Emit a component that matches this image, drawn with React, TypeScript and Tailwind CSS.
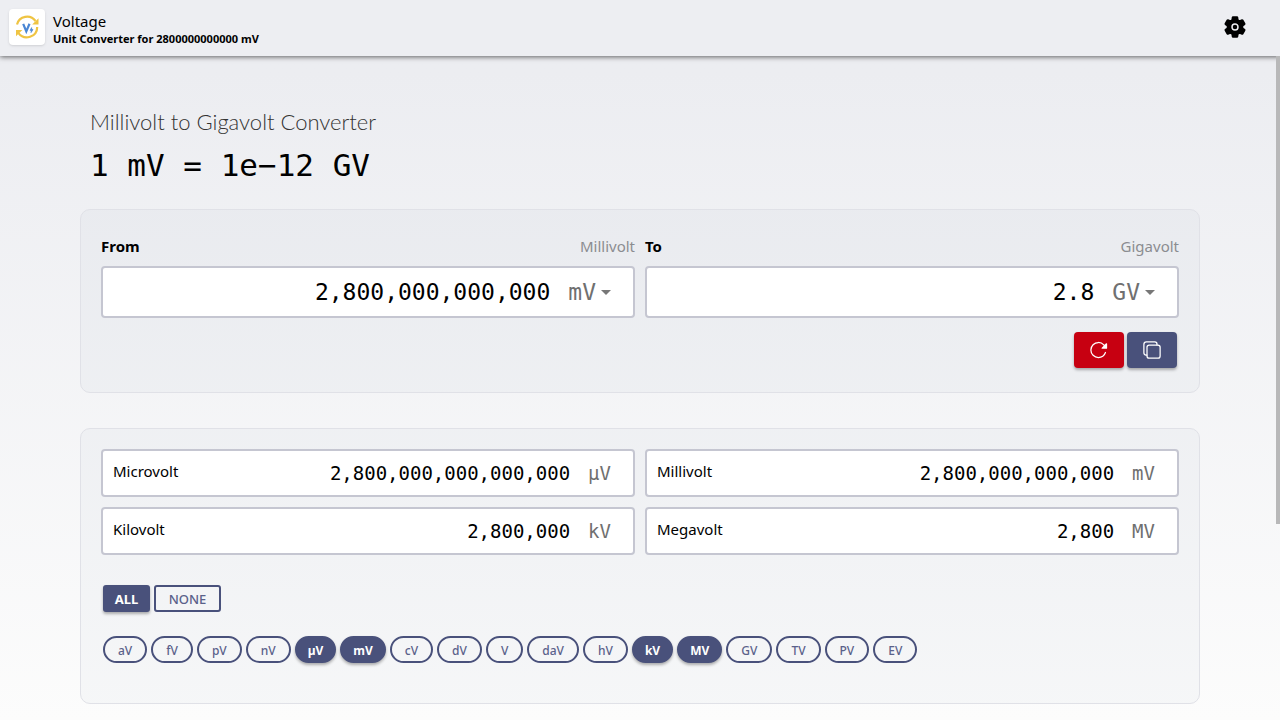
import { useState } from "react";
import clsx from "clsx";
import { IoCopyOutline, IoReload, IoSettings } from "react-icons/io5";

const UNITS = ["aV", "fV", "pV", "nV", "µV", "mV", "cV", "dV", "V", "daV", "hV", "kV", "MV", "GV", "TV", "PV", "EV"];

const RESULTS = [
  { name: "Microvolt", value: "2,800,000,000,000,000", unit: "µV" },
  { name: "Millivolt", value: "2,800,000,000,000", unit: "mV" },
  { name: "Kilovolt", value: "2,800,000", unit: "kV" },
  { name: "Megavolt", value: "2,800", unit: "MV" },
];

function Logo() {
  return (
    <svg viewBox="0 0 36 36" className="h-9 w-9 shrink-0 rounded bg-white shadow" aria-hidden="true">
      <g fill="none" stroke="#efc443" strokeWidth="2.2">
        <path d="M8 15.5A10.4 10.4 0 0 1 26.5 12" />
        <path d="M28.2 18A10.4 10.4 0 0 1 9.5 24.2" />
      </g>
      <path d="M29.5 9.3v6.2h-6.3z" fill="#efc443" />
      <path d="M7 27.3v-6.2h6.4z" fill="#efc443" />
      <path d="M14.2 14.8l3.1 7.6 3.2-7.6" fill="none" stroke="#4a86d4" strokeWidth="2.2" />
      <path d="M22.6 18.6l-1.5 2.8h1.3l-.4 2.2 2-3h-1.3z" fill="#4a86d4" stroke="#4a86d4" strokeWidth=".7" />
    </svg>
  );
}

type FieldProps = { id: string; label: string; unit: string; unitName: string; initial: string };

function ConvertField({ id, label, unit, unitName, initial }: FieldProps) {
  const [value, setValue] = useState(initial);

  return (
    <div>
      <div className="flex h-9 items-center justify-between">
        <label htmlFor={id} className="font-bold">{label}</label>
        <span className="text-[#8b8c90]">{unitName}</span>
      </div>
      <div className="mt-0.5 flex h-13 items-center rounded border-2 border-[#c5c6d1] bg-white pr-[22px] font-['DejaVu_Sans_Mono',monospace] text-[23px]">
        <input
          id={id}
          value={value}
          onChange={(e) => setValue(e.target.value)}
          className="w-full min-w-0 flex-1 bg-transparent text-right outline-none"
        />
        <select
          aria-label={`${label} unit`}
          defaultValue={unit}
          className="ml-[18px] field-sizing-content appearance-none bg-transparent text-[#707070] outline-none"
        >
          {UNITS.map((u) => (
            <option key={u}>{u}</option>
          ))}
        </select>
        <svg viewBox="0 0 10 5" className="ml-[5px] h-[5px] w-2.5 shrink-0" aria-hidden="true">
          <path d="M0 0h10L5 5z" fill="#777" />
        </svg>
      </div>
    </div>
  );
}

export default function App() {
  const [selected, setSelected] = useState(["µV", "mV", "kV", "MV"]);

  const toggle = (unit: string) =>
    setSelected((prev) => (prev.includes(unit) ? prev.filter((u) => u !== unit) : [...prev, unit]));

  return (
    <div className="relative h-screen overflow-hidden bg-linear-to-b from-[#ecedf1] from-10% to-[#fcfcfc] font-['Noto_Sans',sans-serif] text-base text-black">
      <header className="flex h-14 items-center justify-between bg-[#edeef2] px-[9px] pb-0.5 shadow-[0_1px_5px_rgba(0,0,0,0.6)]">
        <div className="flex items-center gap-2">
          <Logo />
          <div className="pt-[3px]">
            <h1 className="text-[15px] leading-5">Voltage</h1>
            <p className="text-[11px] leading-4 font-bold">Unit Converter for 2800000000000 mV</p>
          </div>
        </div>
        <button type="button" aria-label="Settings" className="mr-6">
          <IoSettings className="h-6 w-6" />
        </button>
      </header>
      <div className="absolute top-14 right-0 h-[65vh] w-1 bg-[#b8b8b9]" />

      <main className="px-20 pt-[46px]">
        <div className="px-2.5">
          <h2 className="font-[Lato,sans-serif] text-[22px] leading-10 font-light text-[#333]">Millivolt to Gigavolt Converter</h2>
          <p className="font-['DejaVu_Sans_Mono',monospace] text-[31px] leading-[46px]">1 mV = 1e−12 GV</p>
        </div>

        <section className="mt-[21px] rounded-[10px] border border-[#e0e1e7] bg-[#49517b]/3 px-5 pt-[18px] pb-6">
          <div className="grid grid-cols-2 gap-2.5 text-[15px]">
            <ConvertField id="from" label="From" unit="mV" unitName="Millivolt" initial="2,800,000,000,000" />
            <ConvertField id="to" label="To" unit="GV" unitName="Gigavolt" initial="2.8" />
          </div>
          <div className="mt-3.5 flex justify-end gap-[3px] pr-0.5 text-white">
            <button
              type="button"
              aria-label="Reset"
              className="flex h-9 w-[50px] items-center justify-center rounded bg-[#c70011] shadow-[0_2px_3px_rgba(0,0,0,0.3)]"
            >
              <IoReload className="h-5 w-5" />
            </button>
            <button
              type="button"
              aria-label="Copy"
              className="flex h-9 w-[50px] items-center justify-center rounded bg-[#49517b] shadow-[0_2px_3px_rgba(0,0,0,0.3)]"
            >
              <IoCopyOutline className="h-5 w-5" />
            </button>
          </div>
        </section>

        <section className="mt-[35px] rounded-[10px] border border-[#e0e1e7] bg-[#49517b]/3 px-5 pt-5 pb-10">
          <div className="grid grid-cols-2 gap-2.5">
            {RESULTS.map((r) => (
              <label key={r.name} className="flex h-12 items-center rounded border-2 border-[#c5c6d1] bg-white pr-[22px] pl-2.5">
                <span className="pb-1 text-[15px]">{r.name}</span>
                <input
                  readOnly
                  value={r.value}
                  className="ml-4 min-w-0 flex-1 bg-transparent text-right font-['DejaVu_Sans_Mono',monospace] text-[19px] outline-none"
                />
                <span className="ml-[18px] font-['DejaVu_Sans_Mono',monospace] text-[19px] text-[#707070]">{r.unit}</span>
              </label>
            ))}
          </div>

          <div className="mt-[30px] ml-0.5 flex gap-1 text-[13px]">
            <button
              type="button"
              onClick={() => setSelected(UNITS)}
              className="h-[27px] w-[47px] rounded-[3px] bg-[#49517b] pt-0.5 font-bold text-white shadow-[0_2px_3px_rgba(0,0,0,0.3)]"
            >
              ALL
            </button>
            <button
              type="button"
              onClick={() => setSelected([])}
              className="h-[27px] w-[67px] rounded-[3px] border-2 border-[#49517b] pt-0.5 font-medium text-[#5a618a]"
            >
              NONE
            </button>
          </div>

          <div className="mt-6 ml-0.5 flex flex-wrap gap-1 text-xs">
            {UNITS.map((unit) => (
              <button
                key={unit}
                type="button"
                aria-pressed={selected.includes(unit)}
                onClick={() => toggle(unit)}
                className={clsx(
                  "h-[27px] rounded-full border-2 border-[#49517b] pt-0.5",
                  selected.includes(unit)
                    ? "bg-[#49517b] px-[11px] font-bold text-white shadow-[0_2px_3px_rgba(0,0,0,0.3)]"
                    : "px-[13px] font-medium text-[#5a618a]",
                )}
              >
                {unit}
              </button>
            ))}
          </div>
        </section>
      </main>
    </div>
  );
}
